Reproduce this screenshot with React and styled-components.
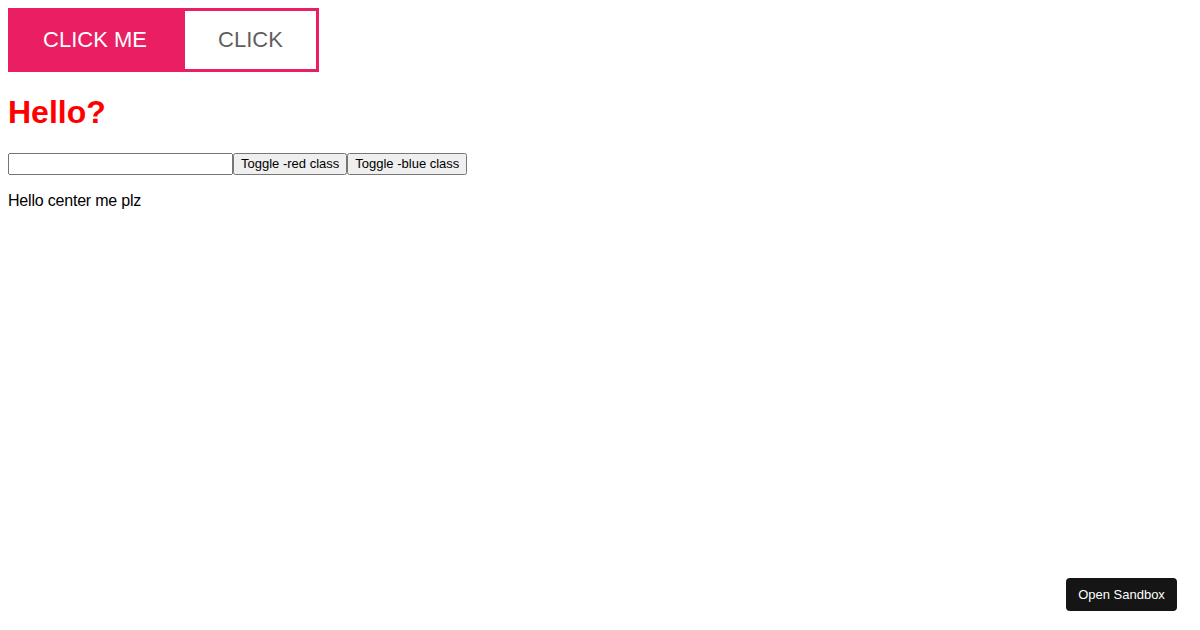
import React from "react";
import styled, { createGlobalStyle } from "styled-components";

const Global = createGlobalStyle`
  body {
    margin: 8px;
    font-family: "Liberation Sans", Arial, sans-serif;
    background: #fff;
    color: #000;
  }
`;

const Group = styled.div`
  display: inline-flex;
  border: 3px solid #e91e63;
`;

const GroupButton = styled.button`
  box-sizing: border-box;
  width: ${(p) => p.$width}px;
  height: 58px;
  padding: 0 ${(p) => (p.$active ? 6 : 0)}px 0 0;
  border: none;
  margin: 0;
  font-family: "Liberation Sans", Arial, sans-serif;
  font-size: 22px;
  background: ${(p) => (p.$active ? "#e91e63" : "#fff")};
  color: ${(p) => (p.$active ? "#fff" : "#5f5f5f")};
  cursor: pointer;
`;

const Title = styled.h1`
  color: #ff0000;
  font-size: 32px;
  line-height: 39px;
  margin: 21px 0;
`;

const Row = styled.div`
  display: flex;
  height: 22px;
`;

const Field = styled.input`
  box-sizing: border-box;
  width: 225px;
  height: 22px;
  margin: 0;
  font-family: "Liberation Sans", Arial, sans-serif;
  font-size: 13px;
`;

const Toggle = styled.button`
  box-sizing: border-box;
  height: 22px;
  margin: 0;
  padding: 0 6px 2px;
  font-family: "Liberation Sans", Arial, sans-serif;
  font-size: 13px;
`;

const Text = styled.p`
  font-size: 16px;
  letter-spacing: -0.2px;
  margin: 17px 0;
`;

const Sandbox = styled.button`
  position: fixed;
  right: 23px;
  bottom: 19px;
  width: 111px;
  height: 33px;
  padding: 0;
  border: none;
  border-radius: 4px;
  background: #151515;
  color: #fff;
  font-family: "Liberation Sans", Arial, sans-serif;
  font-size: 13px;
`;

export default function App() {
  return (
    <>
      <Global />
      <Group>
        <GroupButton $active $width={174}>CLICK ME</GroupButton>
        <GroupButton $width={131}>CLICK</GroupButton>
      </Group>
      <Title>Hello?</Title>
      <Row>
        <Field type="text" />
        <Toggle>Toggle -red class</Toggle>
        <Toggle>Toggle -blue class</Toggle>
      </Row>
      <Text>Hello center me plz</Text>
      <Sandbox>Open Sandbox</Sandbox>
    </>
  );
}
